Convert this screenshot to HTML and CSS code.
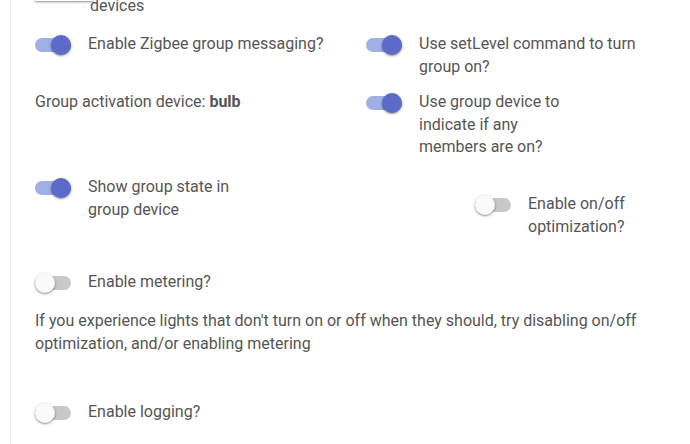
FILE: index.html
```html
<!DOCTYPE html>
<html>
<head>
<meta charset="utf-8">
<link rel="stylesheet" href="styles.css">
</head>
<body>
<div class="panel">
  <div class="top-row">
    <div class="cut-box"></div>
    <span class="label">devices</span>
  </div>

  <div class="row row-1">
    <div class="item">
      <span class="switch on"></span>
      <span class="label">Enable Zigbee group messaging?</span>
    </div>
    <div class="item">
      <span class="switch on"></span>
      <span class="label">Use setLevel command to turn<br>group on?</span>
    </div>
  </div>

  <div class="row row-2">
    <div class="item">
      <span class="label plain">Group activation device: <b>bulb</b></span>
    </div>
    <div class="item">
      <span class="switch on"></span>
      <span class="label">Use group device to<br>indicate if any<br>members are on?</span>
    </div>
  </div>

  <div class="row row-3">
    <div class="item">
      <span class="switch on"></span>
      <span class="label">Show group state in<br>group device</span>
    </div>
    <div class="item shifted">
      <span class="switch"></span>
      <span class="label">Enable on/off<br>optimization?</span>
    </div>
  </div>

  <div class="single row-4">
    <div class="item">
      <span class="switch"></span>
      <span class="label">Enable metering?</span>
    </div>
  </div>

  <p class="note">If you experience lights that don't turn on or off when they should, try disabling on/off optimization, and/or enabling metering</p>

  <div class="single row-5">
    <div class="item">
      <span class="switch"></span>
      <span class="label">Enable logging?</span>
    </div>
  </div>
</div>
</body>
</html>
```

FILE: styles.css
```css
html, body {
  margin: 0;
  padding: 0;
  background: #ffffff;
  overflow: hidden;
}

body {
  font-family: Roboto, "Liberation Sans", Arial, sans-serif;
  font-size: 16px;
  line-height: 22.5px;
  color: #555555;
}

.panel {
  margin-left: 10px;
  border-left: 1px solid #ececec;
  padding-left: 24px;
  height: 444px;
  box-sizing: border-box;
  overflow: hidden;
}

.top-row {
  display: flex;
  align-items: flex-start;
  margin-top: -5px;
  height: 20px;
}

.cut-box {
  width: 58px;
  height: 12px;
  background: #ffffff;
  box-shadow: 0 1px 2px rgba(0, 0, 0, 0.45);
  margin-top: -6px;
  flex: none;
}

.top-row .label {
  margin-left: -3px;
}

.row {
  display: grid;
  grid-template-columns: 331px 1fr;
}

.row-1 { margin-top: 18px; }
.row-2 { margin-top: 13px; }
.row-3 { margin-top: 17.5px; }
.row-4 { margin-top: 33px; }
.row-5 { margin-top: 46px; }

.item {
  display: flex;
  align-items: flex-start;
}

.item.shifted {
  margin-top: 17px;
  margin-left: 109px;
}

.label {
  display: block;
}

.switch + .label {
  margin-left: 17px;
}

.switch {
  flex: none;
  position: relative;
  width: 36px;
  height: 20px;
  margin-top: 2px;
}

.switch::before {
  content: "";
  position: absolute;
  left: 0;
  top: 3px;
  width: 36px;
  height: 14px;
  border-radius: 7px;
  background: #c9c9c9;
}

.switch::after {
  content: "";
  position: absolute;
  left: 0;
  top: 0;
  width: 20px;
  height: 20px;
  border-radius: 50%;
  background: #fafafa;
  box-shadow: 0 1px 3px rgba(0, 0, 0, 0.35), 0 1px 1px rgba(0, 0, 0, 0.14);
}

.switch.on::before {
  background: #a0b0e6;
}

.switch.on::after {
  left: 16px;
  background: #5c6bc9;
}

.note {
  margin: 16.5px 0 0 0;
  width: 620px;
}
```
